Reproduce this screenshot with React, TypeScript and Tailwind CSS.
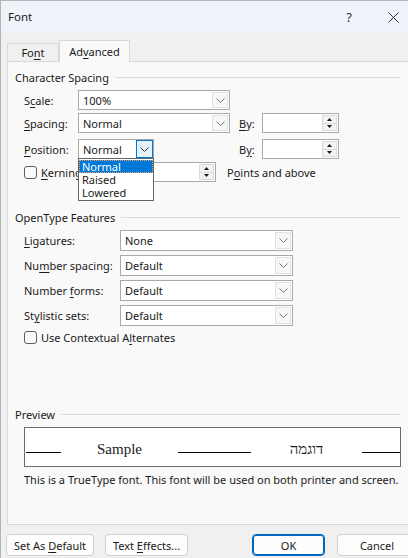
import React from "react";

function Acc({ text, at }: { text: string; at: number }) {
  return (
    <span className="whitespace-pre">
      {text.slice(0, at)}
      <span className="underline underline-offset-2">{text.charAt(at)}</span>
      {text.slice(at + 1)}
    </span>
  );
}

function Chevron({ dark }: { dark?: boolean }) {
  return (
    <svg width="9" height="5" viewBox="0 0 9 5" fill="none">
      <path d="M0.5 0.5L4.5 4.5L8.5 0.5" stroke={dark ? "#2b2b2b" : "#7a7a7a"} strokeWidth="1" />
    </svg>
  );
}

function Combo({ value, className, open }: { value: string; className: string; open?: boolean }) {
  return (
    <div className={`flex shrink-0 border border-[#a9a9a9] bg-white ${className}`}>
      <div className="flex flex-1 items-center pl-[4px] text-[#1a1a1a]">{value}</div>
      {open ? (
        <div className="flex w-[17px] items-center justify-center border border-[#0078d7] bg-[#e5f1fb]">
          <Chevron dark />
        </div>
      ) : (
        <div className="m-px flex w-[16px] items-center justify-center border border-[#e1e1e1] bg-[#f7f7f7]">
          <Chevron />
        </div>
      )}
    </div>
  );
}

function Spin({ className }: { className: string }) {
  return (
    <div className={`flex shrink-0 border border-[#a9a9a9] bg-white ${className}`}>
      <div className="flex-1" />
      <div className="m-px flex w-[15px] flex-col border border-[#dadada] bg-[#f3f3f3]">
        <div className="flex flex-1 items-center justify-center border-b border-[#dadada]">
          <svg width="5" height="3" viewBox="0 0 5 3">
            <path d="M0 3L2.5 0L5 3Z" fill="#1a1a1a" />
          </svg>
        </div>
        <div className="flex flex-1 items-center justify-center">
          <svg width="5" height="3" viewBox="0 0 5 3">
            <path d="M0 0L2.5 3L5 0Z" fill="#1a1a1a" />
          </svg>
        </div>
      </div>
    </div>
  );
}

function Group({ title }: { title: string }) {
  return (
    <div className="flex h-[16px] items-center pl-[7px]">
      <span className="text-[#1a1a1a]">{title}</span>
      <div className="ml-[6px] h-px flex-1 bg-[#dcdcdc]" />
    </div>
  );
}

function Check() {
  return <div className="h-[13px] w-[13px] shrink-0 rounded-[3px] border border-[#5f5f5f] bg-[#fbfbfb]" />;
}

function Button({ children, className, primary }: { children: React.ReactNode; className: string; primary?: boolean }) {
  return (
    <div
      className={`flex h-[22px] shrink-0 items-center justify-center rounded-[4px] border text-[#1a1a1a] ${
        primary ? "border-[#0067c0] bg-[#fdfdfd] shadow-[inset_0_0_0_1px_#0067c0]" : "border-[#d0d0d0] bg-[#fdfdfd]"
      } ${className}`}
    >
      {children}
    </div>
  );
}

const FEATURES: [string, number, string][] = [
  ["Ligatures:", 0, "None"],
  ["Number spacing:", 2, "Default"],
  ["Number forms:", 7, "Default"],
  ["Stylistic sets:", 2, "Default"],
];

export default function App() {
  return (
    <div className="h-[558px] w-[408px] overflow-hidden border-l border-t border-[#b4b4b4] bg-[#f0f0f0] font-['Noto_Sans','Open_Sans',sans-serif] text-[11px] leading-none text-[#1a1a1a]">
      {/* Title bar */}
      <div className="flex h-[32px] items-center bg-[#eef4f9] pl-[7px]">
        <span className="text-[11.5px]">Font</span>
        <span className="ml-auto text-[13px] text-[#333]">?</span>
        <svg className="ml-[36px] mr-[9px]" width="11" height="11" viewBox="0 0 11 11">
          <path d="M0.5 0.5L10.5 10.5M10.5 0.5L0.5 10.5" stroke="#333" strokeWidth="1" />
        </svg>
      </div>

      {/* Tabs */}
      <div className="flex h-[28px] items-end pl-[6px]">
        <div className="flex h-[18px] w-[52px] items-center justify-center border border-b-0 border-[#d9d9d9] bg-[#f0f0f0]">
          <Acc text="Font" at={2} />
        </div>
        <div className="relative z-10 -mb-px flex h-[22px] w-[71px] items-center justify-center border border-b-0 border-[#d9d9d9] bg-[#f9f9f9]">
          <Acc text="Advanced" at={2} />
        </div>
      </div>

      {/* Panel */}
      <div className="ml-[6px] flex h-[464px] w-[412px] flex-col border border-[#d9d9d9] bg-[#f9f9f9] pt-[7px]">
        <div className="w-[393px]">
          <Group title="Character Spacing" />
        </div>

        <div className="mt-[5px] flex h-[20px] items-center">
          <span className="ml-[16px] w-[54px]"><Acc text="Scale:" at={1} /></span>
          <Combo value="100%" className="h-[20px] w-[152px]" />
        </div>

        <div className="mt-[3px] flex h-[20px] items-center">
          <span className="ml-[16px] w-[54px]"><Acc text="Spacing:" at={0} /></span>
          <Combo value="Normal" className="h-[20px] w-[152px]" />
          <span className="ml-[9px] w-[23px]"><Acc text="By:" at={0} /></span>
          <Spin className="h-[20px] w-[77px]" />
        </div>

        <div className="mt-[6px] flex h-[20px] items-center">
          <span className="ml-[16px] w-[54px]"><Acc text="Position:" at={0} /></span>
          <div className="relative">
            <Combo value="Normal" open className="h-[20px] w-[76px]" />
            <div className="absolute left-0 top-[19px] z-20 flex w-[76px] flex-col border border-[#646464] bg-white py-px">
              <div className="flex h-[13px] items-center border border-dotted border-[#f0a060] bg-[#0078d7] pl-[2px] text-white">
                Normal
              </div>
              <div className="flex h-[13px] items-center pl-[3px]">Raised</div>
              <div className="flex h-[13px] items-center pl-[3px]">Lowered</div>
            </div>
          </div>
          <span className="ml-[85px] w-[23px]"><Acc text="By:" at={1} /></span>
          <Spin className="h-[20px] w-[77px]" />
        </div>

        <div className="mt-[3px] flex h-[20px] items-center">
          <div className="ml-[16px]"><Check /></div>
          <span className="ml-[4px] w-[100px]"><Acc text="Kerning for fonts:" at={0} /></span>
          <Spin className="h-[20px] w-[75px]" />
          <span className="ml-[11px]"><Acc text="Points and above" at={1} /></span>
        </div>

        <div className="mt-[27px] w-[393px]">
          <Group title="OpenType Features" />
        </div>

        <div className="mt-[5px] flex flex-col gap-[4px]">
          {FEATURES.map(([label, at, value]) => (
            <div key={label} className="flex h-[21px] items-center">
              <span className="ml-[16px] w-[96px]"><Acc text={label} at={at} /></span>
              <Combo value={value} className="h-[21px] w-[173px]" />
            </div>
          ))}
        </div>

        <div className="mt-[4px] flex h-[14px] items-center">
          <div className="ml-[16px]"><Check /></div>
          <span className="ml-[4px]"><Acc text="Use Contextual Alternates" at={16} /></span>
        </div>

        <div className="mt-[62px] w-[393px]">
          <Group title="Preview" />
        </div>

        <div className="ml-[16px] mt-[5px] flex h-[40px] w-[377px] items-end border border-[#6b6b6b] bg-white pb-[13px] pl-px">
          <div className="h-px w-[35px] bg-black" />
          <span className="mb-[-4px] w-[117px] text-center font-['Liberation_Serif',serif] text-[15px]">Sample</span>
          <div className="h-px w-[73px] bg-black" />
          <span className="mb-[-4px] w-[111px] text-center font-['Liberation_Serif','DejaVu_Serif',serif] text-[15px]">דוגמה</span>
          <div className="h-px w-[38px] bg-black" />
        </div>

        <div className="ml-[16px] mt-[5px] flex h-[14px] items-center whitespace-nowrap">
          This is a TrueType font. This font will be used on both printer and screen.
        </div>
      </div>

      {/* Bottom buttons */}
      <div className="mt-[9px] flex items-center">
        <Button className="ml-[5px] w-[88px]"><Acc text="Set As Default" at={7} /></Button>
        <Button className="ml-[11px] w-[83px]"><Acc text="Text Effects..." at={5} /></Button>
        <Button primary className="ml-[64px] w-[73px]">OK</Button>
        <Button className="ml-[12px] w-[80px]">Cancel</Button>
      </div>
    </div>
  );
}
